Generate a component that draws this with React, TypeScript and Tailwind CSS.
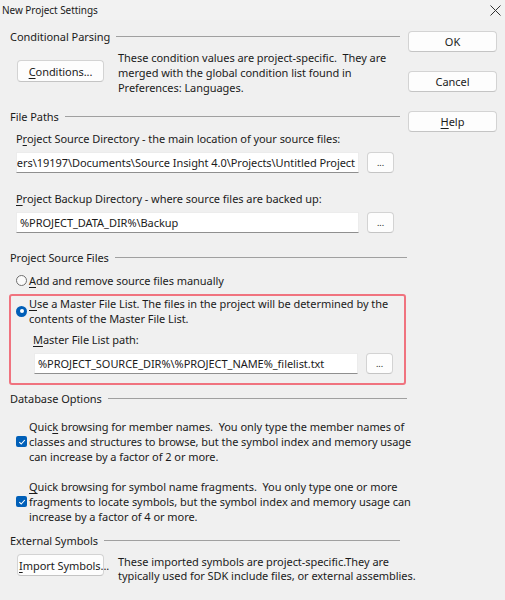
import type { ReactNode } from "react";

const font = { fontFamily: '"Noto Sans", "Liberation Sans", sans-serif' };

const U = ({ children }: { children: ReactNode }) => (
  <span className="underline underline-offset-2">{children}</span>
);

const SectionHeader = ({ title, width }: { title: string; width: string }) => (
  <div className={`flex h-[15px] items-center gap-[6px] ${width}`}>
    <span className="whitespace-nowrap">{title}</span>
    <div className="h-px flex-1 bg-[#a0a0a0]" />
  </div>
);

const DlgButton = ({
  children,
  className = "",
}: {
  children: ReactNode;
  className?: string;
}) => (
  <div
    className={`flex shrink-0 items-center justify-center rounded-[4px] border border-[#d3d3d3] border-b-[#c4c4c4] bg-[#fdfdfd] ${className}`}
  >
    {children}
  </div>
);

const PathInput = ({
  value,
  width,
  alignEnd = false,
}: {
  value: string;
  width: string;
  alignEnd?: boolean;
}) => (
  <div className="flex items-center gap-[8px]">
    <div
      className={`flex h-[21px] items-center overflow-hidden border border-[#ececec] border-b-[#8f8f8f] bg-white px-[3px] ${width} ${
        alignEnd ? "justify-end" : "justify-start"
      }`}
    >
      <span className="whitespace-nowrap">{value}</span>
    </div>
    <DlgButton className="h-[21px] w-[27px] text-[9px] leading-none">...</DlgButton>
  </div>
);

const CheckBox = () => (
  <div className="flex h-[11px] w-[11px] shrink-0 items-center justify-center rounded-[2px] bg-[#005fb8]">
    <svg width="8" height="8" viewBox="0 0 8 8">
      <path d="M1.3 4.2 L3.2 6 L6.8 2" fill="none" stroke="white" strokeWidth="1.1" />
    </svg>
  </div>
);

const App = () => {
  return (
    <div
      className="h-[600px] w-[505px] overflow-hidden bg-[#f0f0f0] text-[11px] leading-[15px] tracking-[-0.05px] text-[#1b1b1b]"
      style={font}
    >
      {/* title bar */}
      <div className="flex h-[20px] items-center justify-between bg-[#f2f2f2] pl-[2px] pr-[4px]">
        <span className="text-[10px]">New Project Settings</span>
        <svg width="11" height="11" viewBox="0 0 11 11">
          <path d="M0.5 0.5 L10.5 10.5 M10.5 0.5 L0.5 10.5" stroke="#333" strokeWidth="1" />
        </svg>
      </div>

      <div className="flex">
        {/* left column */}
        <div className="flex w-[398px] shrink-0 flex-col pl-[10px]">
          <div className="mt-[9px]">
            <SectionHeader title="Conditional Parsing" width="w-[390px]" />
          </div>
          <div className="mt-[6px] flex h-[45px]">
            <DlgButton className="ml-[7px] mt-[10px] h-[22px] w-[87px]">
              <span>
                <U>C</U>onditions...
              </span>
            </DlgButton>
            <div className="ml-[14px] w-[282px] shrink-0">
              These condition values are project-specific.&nbsp; They are merged with the
              global condition list found in Preferences: Languages.
            </div>
          </div>

          <div className="mt-[14px]">
            <SectionHeader title="File Paths" width="w-[390px]" />
          </div>
          <div className="ml-[6px] mt-[7px] whitespace-nowrap">
            P<U>r</U>oject Source Directory - the main location of your source files:
          </div>
          <div className="ml-[6px] mt-[6px]">
            <PathInput
              value="C:\Users\19197\Documents\Source Insight 4.0\Projects\Untitled Project"
              width="w-[343px]"
              alignEnd
            />
          </div>
          <div className="ml-[6px] mt-[18px] whitespace-nowrap">
            <U>P</U>roject Backup Directory - where source files are backed up:
          </div>
          <div className="ml-[6px] mt-[6px]">
            <PathInput value="%PROJECT_DATA_DIR%\Backup" width="w-[343px]" />
          </div>

          <div className="mt-[17px]">
            <SectionHeader title="Project Source Files" width="w-[397px]" />
          </div>
          <div className="ml-[6px] mt-[8px] flex items-center gap-[2px]">
            <div className="h-[11px] w-[11px] rounded-full border border-[#6f6f6f] bg-[#fafafa]" />
            <span>
              <U>A</U>dd and remove source files manually
            </span>
          </div>

          <div className="-ml-[1px] mt-[6px] w-[397px] rounded-[3px] border-2 border-[#f0737f] pb-[9px]">
            <div className="flex items-center gap-[2px] pl-[5px]">
              <div className="flex h-[11px] w-[11px] shrink-0 items-center justify-center rounded-full bg-[#005fb8]">
                <div className="h-[4px] w-[4px] rounded-full bg-white" />
              </div>
              <div className="w-[362px] shrink-0">
                <U>U</U>se a Master File List. The files in the project will be determined by
                the contents of the Master File List.
              </div>
            </div>
            <div className="ml-[22px] mt-[6px]">
              <U>M</U>aster File List path:
            </div>
            <div className="ml-[23px] mt-[6px]">
              <PathInput value="%PROJECT_SOURCE_DIR%\%PROJECT_NAME%_filelist.txt" width="w-[324px]" />
            </div>
          </div>

          <div className="mt-[6px]">
            <SectionHeader title="Database Options" width="w-[397px]" />
          </div>
          <div className="ml-[6px] mt-[13px] flex items-center gap-[2px]">
            <CheckBox />
            <div className="w-[390px] shrink-0">
              Quic<U>k</U> browsing for member names.&nbsp; You only type the member names of
              classes and structures to browse, but the symbol index and memory usage can
              increase by a factor of 2 or more.
            </div>
          </div>
          <div className="ml-[6px] mt-[15px] flex items-center gap-[2px]">
            <CheckBox />
            <div className="w-[390px] shrink-0">
              <U>Q</U>uick browsing for symbol name fragments.&nbsp; You only type one or more
              fragments to locate symbols, but the symbol index and memory usage can increase
              by a factor of 4 or more.
            </div>
          </div>

          <div className="mt-[9px]">
            <SectionHeader title="External Symbols" width="w-[390px]" />
          </div>
          <div className="mt-[6px] flex">
            <DlgButton className="ml-[7px] h-[22px] w-[87px] justify-start pl-[1px]">
              <span className="whitespace-nowrap">
                <U>I</U>mport Symbols...
              </span>
            </DlgButton>
            <div className="ml-[14px] mt-[1px] w-[300px] shrink-0 leading-[14px]">
              These imported symbols are project-specific.They are typically used for SDK
              include files, or external assemblies.
            </div>
          </div>
        </div>

        {/* right column */}
        <div className="ml-[10px] flex flex-col gap-[19px] pt-[11px]">
          <DlgButton className="h-[21px] w-[89px]">OK</DlgButton>
          <DlgButton className="h-[21px] w-[89px]">Cancel</DlgButton>
          <DlgButton className="h-[21px] w-[89px]">
            <span>
              <U>H</U>elp
            </span>
          </DlgButton>
        </div>
      </div>
    </div>
  );
};

export default App;
